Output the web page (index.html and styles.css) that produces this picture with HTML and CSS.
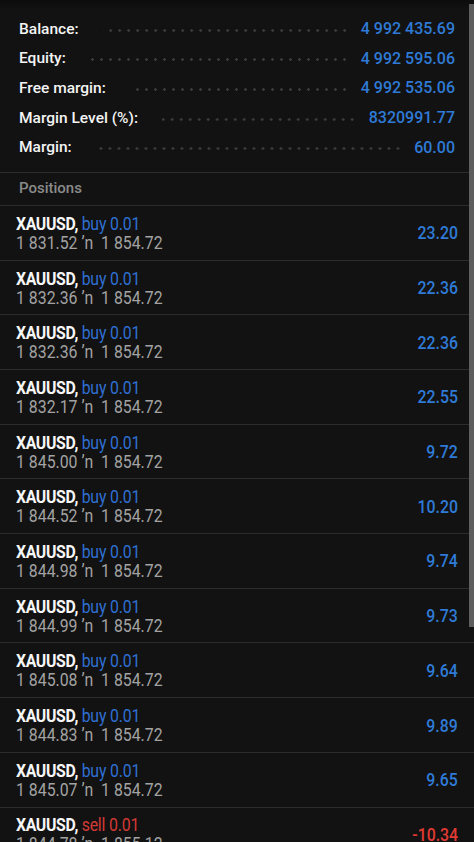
FILE: index.html
```html
<!DOCTYPE html>
<html lang="en">
<head>
    <meta charset="UTF-8">
    <meta name="viewport" content="width=device-width, initial-scale=1.0">
    <title>Trade</title>
    <link rel="stylesheet" href="styles.css">
</head>
<body>
    <div class="screen">
        <div class="summary">
            <div class="summary-row"><span class="label">Balance:</span><span class="leader"></span><span class="amount">4 992 435.69</span></div>
            <div class="summary-row"><span class="label">Equity:</span><span class="leader"></span><span class="amount">4 992 595.06</span></div>
            <div class="summary-row"><span class="label">Free margin:</span><span class="leader"></span><span class="amount">4 992 535.06</span></div>
            <div class="summary-row"><span class="label">Margin Level (%):</span><span class="leader"></span><span class="amount">8320991.77</span></div>
            <div class="summary-row"><span class="label">Margin:</span><span class="leader"></span><span class="amount">60.00</span></div>
        </div>

        <div class="section-title">Positions</div>

        <ul class="position-list">
            <li class="position">
                <div class="position-info">
                    <div class="position-name">XAUUSD, <span class="buy">buy 0.01</span></div>
                    <div class="position-price">1 831.52 ’n&nbsp; 1 854.72</div>
                </div>
                <div class="profit">23.20</div>
            </li>
            <li class="position">
                <div class="position-info">
                    <div class="position-name">XAUUSD, <span class="buy">buy 0.01</span></div>
                    <div class="position-price">1 832.36 ’n&nbsp; 1 854.72</div>
                </div>
                <div class="profit">22.36</div>
            </li>
            <li class="position">
                <div class="position-info">
                    <div class="position-name">XAUUSD, <span class="buy">buy 0.01</span></div>
                    <div class="position-price">1 832.36 ’n&nbsp; 1 854.72</div>
                </div>
                <div class="profit">22.36</div>
            </li>
            <li class="position">
                <div class="position-info">
                    <div class="position-name">XAUUSD, <span class="buy">buy 0.01</span></div>
                    <div class="position-price">1 832.17 ’n&nbsp; 1 854.72</div>
                </div>
                <div class="profit">22.55</div>
            </li>
            <li class="position">
                <div class="position-info">
                    <div class="position-name">XAUUSD, <span class="buy">buy 0.01</span></div>
                    <div class="position-price">1 845.00 ’n&nbsp; 1 854.72</div>
                </div>
                <div class="profit">9.72</div>
            </li>
            <li class="position">
                <div class="position-info">
                    <div class="position-name">XAUUSD, <span class="buy">buy 0.01</span></div>
                    <div class="position-price">1 844.52 ’n&nbsp; 1 854.72</div>
                </div>
                <div class="profit">10.20</div>
            </li>
            <li class="position">
                <div class="position-info">
                    <div class="position-name">XAUUSD, <span class="buy">buy 0.01</span></div>
                    <div class="position-price">1 844.98 ’n&nbsp; 1 854.72</div>
                </div>
                <div class="profit">9.74</div>
            </li>
            <li class="position">
                <div class="position-info">
                    <div class="position-name">XAUUSD, <span class="buy">buy 0.01</span></div>
                    <div class="position-price">1 844.99 ’n&nbsp; 1 854.72</div>
                </div>
                <div class="profit">9.73</div>
            </li>
            <li class="position">
                <div class="position-info">
                    <div class="position-name">XAUUSD, <span class="buy">buy 0.01</span></div>
                    <div class="position-price">1 845.08 ’n&nbsp; 1 854.72</div>
                </div>
                <div class="profit">9.64</div>
            </li>
            <li class="position">
                <div class="position-info">
                    <div class="position-name">XAUUSD, <span class="buy">buy 0.01</span></div>
                    <div class="position-price">1 844.83 ’n&nbsp; 1 854.72</div>
                </div>
                <div class="profit">9.89</div>
            </li>
            <li class="position">
                <div class="position-info">
                    <div class="position-name">XAUUSD, <span class="buy">buy 0.01</span></div>
                    <div class="position-price">1 845.07 ’n&nbsp; 1 854.72</div>
                </div>
                <div class="profit">9.65</div>
            </li>
            <li class="position">
                <div class="position-info">
                    <div class="position-name">XAUUSD, <span class="sell">sell 0.01</span></div>
                    <div class="position-price">1 844.78 ’n&nbsp; 1 855.12</div>
                </div>
                <div class="profit loss">-10.34</div>
            </li>
        </ul>

        <div class="scrollbar"></div>
    </div>
</body>
</html>
```

FILE: styles.css
```css
body {
    margin: 0;
    background-color: #121212;
    font-family: Roboto, "Liberation Sans", sans-serif;
    color: #f2f2f2;
}
.screen {
    position: relative;
    height: 842px;
    overflow: hidden;
    background: linear-gradient(#0c0c0c, #121212 10px);
}
.summary {
    padding: 14px 19px 10px 19px;
}
.summary-row {
    display: flex;
    align-items: center;
    height: 29.6px;
    font-size: 15.5px;
}
.label {
    font-weight: 500;
    color: #f4f4f4;
}
.leader {
    flex: 1;
    height: 3px;
    margin: 3px 12px 0 24px;
    background-image: radial-gradient(circle, #3d3d3d 1.1px, transparent 1.5px);
    background-size: 9px 3px;
    background-position: right center;
}
.amount {
    font-weight: 500;
    font-size: 16px;
    color: #2f7ad6;
}
.section-title {
    border-top: 1px solid #2c2c2c;
    border-bottom: 1px solid #2c2c2c;
    height: 32px;
    line-height: 31px;
    padding-left: 19px;
    font-size: 15px;
    font-weight: 500;
    color: #8a8a8a;
}
.position-list {
    list-style: none;
    margin: 0;
    padding: 0;
}
.position {
    display: flex;
    align-items: center;
    justify-content: space-between;
    height: 53.7px;
    padding: 0 16px;
    border-bottom: 1px solid #2c2c2c;
}
/* the app uses a condensed face, squeeze Roboto to match */
.position-info {
    font-size: 18px;
    line-height: 19px;
    transform: scaleX(0.88);
    transform-origin: left center;
}
.position-name {
    font-weight: 700;
    letter-spacing: -0.4px;
    color: #f6f6f6;
}
.buy {
    font-weight: 400;
    letter-spacing: -0.2px;
    color: #2f6fd2;
}
.sell {
    font-weight: 400;
    letter-spacing: -0.2px;
    color: #d23a35;
}
.position-price {
    color: #a2a2a2;
}
.profit {
    font-size: 18px;
    font-weight: 500;
    transform: scaleX(0.88);
    transform-origin: right center;
    color: #2f7ad6;
}
.profit.loss {
    color: #e03a33;
}
.scrollbar {
    position: absolute;
    top: 4px;
    right: 0;
    width: 5px;
    height: 623px;
    background-color: #5e5e5e;
}
```
